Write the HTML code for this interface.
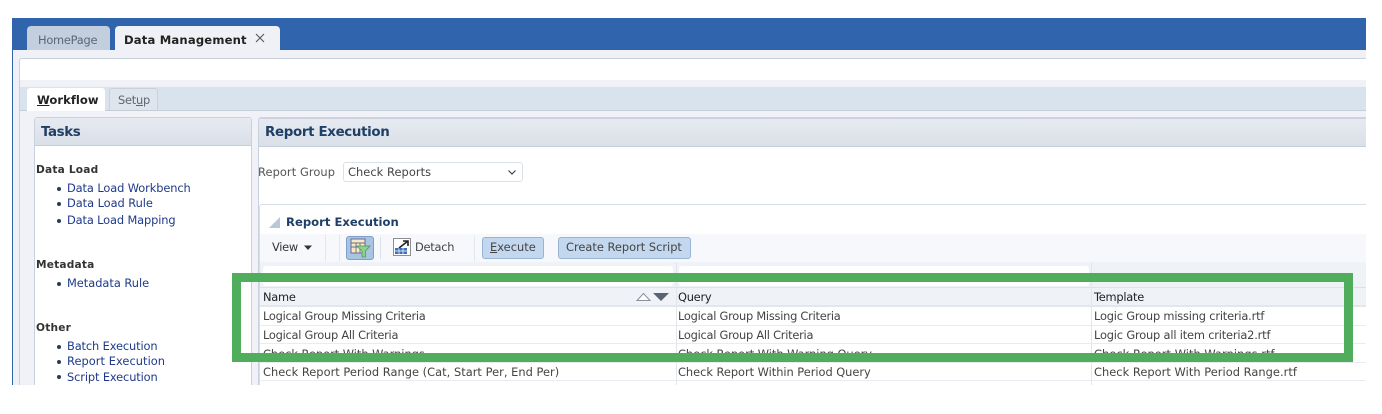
<!DOCTYPE html>
<html><head><meta charset="utf-8">
<style>
html,body{margin:0;padding:0;background:#fff}
body{width:1382px;height:414px;position:relative;overflow:hidden;font-family:"DejaVu Sans","Liberation Sans",sans-serif;font-size:11.4px;color:#333}
.a{position:absolute}
.t{position:absolute;white-space:nowrap;line-height:16px}
.lk{color:#1f3a8a;letter-spacing:-.1px}
.sec{font-weight:bold;color:#333;font-size:10.6px;letter-spacing:.2px}
.dot{position:absolute;width:4px;height:4px;border-radius:50%;background:#2c3a55}
.row{color:#444;letter-spacing:-.25px}
.head{color:#222;letter-spacing:-.25px}
u{text-decoration:underline}
</style></head><body>
<div class="a" style="left:12px;top:18px;width:1354px;height:32px;background:#3064ac"></div>
<div class="a" style="left:12px;top:18px;width:1px;height:367px;background:#3064ac"></div>
<div class="a" style="left:13px;top:50px;width:1353px;height:335px;background:#eff1f6"></div>
<div class="a" style="left:27px;top:26px;width:83px;height:24px;background:#c3cfdf;border-radius:4px 4px 0 0"></div>
<div class="t" style="left:38px;top:32px;color:#5c6675;font-size:11.4px;letter-spacing:-.25px">HomePage</div>
<div class="a" style="left:115px;top:26px;width:165px;height:25px;background:#eff1f6;border-radius:4px 4px 0 0"></div>
<div class="t" style="left:124px;top:32px;font-weight:bold;color:#222;font-size:11.6px;letter-spacing:.17px">Data Management</div>
<svg class="a" style="left:255px;top:33px" width="10" height="10"><path d="M1 1L9 9M9 1L1 9" stroke="#555" stroke-width="1.1"/></svg>

<div class="a" style="left:19px;top:58px;width:1347px;height:327px;background:#fff;border-top:1px solid #c9d1dc;border-left:1px solid #c9d1dc;border-radius:3px 0 0 0;box-sizing:border-box"></div>
<div class="a" style="left:20px;top:80px;width:1346px;height:305px;background:#f0f2f7"></div>
<div class="a" style="left:20px;top:87px;width:1346px;height:23px;background:#d9e3ed"></div>
<div class="a" style="left:20px;top:110px;width:1346px;height:1px;background:#c5cdd9"></div>
<div class="a" style="left:27px;top:88px;width:78px;height:23px;background:#fff;border-radius:3px 3px 0 0"></div>
<div class="t" style="left:37px;top:92px;font-weight:bold;color:#222;font-size:11.6px;letter-spacing:.02px"><u>W</u>orkflow</div>
<div class="a" style="left:109px;top:88px;width:49px;height:22px;background:#dfe5ec;border:1px solid #c9d1dc;border-bottom:0;border-radius:3px 3px 0 0;box-sizing:border-box"></div>
<div class="t" style="left:118px;top:92px;color:#5c6675;letter-spacing:-.25px">Set<u>u</u>p</div>

<!-- tasks -->
<div class="a" style="left:34px;top:117px;width:218px;height:268px;background:#fff;border:1px solid #c9d1dc;border-bottom:0;border-radius:3px 3px 0 0;box-sizing:border-box"></div>
<div class="a" style="left:35px;top:118px;width:216px;height:27px;background:linear-gradient(#e7eaf1,#dae0e8);border-bottom:1px solid #c5cdd9"></div>
<div class="t" style="left:41px;top:125px;font-weight:bold;color:#1f3f66;font-size:13.4px;letter-spacing:-.4px">Tasks</div>
<div class="t sec" style="left:36px;top:162px">Data Load</div>
<div class="dot" style="left:57px;top:187px"></div><div class="t lk" style="left:67px;top:180px">Data Load Workbench</div>
<div class="dot" style="left:57px;top:202px"></div><div class="t lk" style="left:67px;top:195px;letter-spacing:-.05px">Data Load Rule</div>
<div class="dot" style="left:57px;top:219px"></div><div class="t lk" style="left:67px;top:212px;letter-spacing:-.13px">Data Load Mapping</div>
<div class="t sec" style="left:36px;top:257px">Metadata</div>
<div class="dot" style="left:57px;top:282px"></div><div class="t lk" style="left:67px;top:275px;letter-spacing:-.02px">Metadata Rule</div>
<div class="t sec" style="left:36px;top:320px">Other</div>
<div class="dot" style="left:57px;top:345px"></div><div class="t lk" style="left:67px;top:338px;letter-spacing:-.12px">Batch Execution</div>
<div class="dot" style="left:57px;top:360px"></div><div class="t lk" style="left:67px;top:353px;letter-spacing:.05px">Report Execution</div>
<div class="dot" style="left:57px;top:375px"></div><div class="t lk" style="left:67px;top:369px;letter-spacing:-.12px">Script Execution</div>

<!-- report panel -->
<div class="a" style="left:258px;top:117px;width:1108px;height:268px;background:#fff;border-top:2px solid #cdd2df;border-left:1px solid #c9d1dc;border-radius:3px 0 0 0;box-sizing:border-box"></div>
<div class="a" style="left:259px;top:119px;width:1107px;height:27px;background:linear-gradient(#e7eaf1,#dae0e8);border-bottom:1px solid #c5cdd9"></div>
<div class="t" style="left:265px;top:125px;font-weight:bold;color:#1f3f66;font-size:13.4px;letter-spacing:-.34px">Report Execution</div>
<div class="t" style="left:258px;top:164px;color:#555;letter-spacing:.08px">Report Group</div>
<div class="a" style="left:343px;top:162px;width:180px;height:20px;background:#fff;border:1px solid #dbe1e8;border-radius:3px;box-sizing:border-box"></div>
<div class="t" style="left:348px;top:164px;color:#444;letter-spacing:.06px">Check Reports</div>
<svg class="a" style="left:507px;top:169px" width="10" height="7"><path d="M1.5 1.5L5 5L8.5 1.5" fill="none" stroke="#444" stroke-width="1.2"/></svg>

<div class="a" style="left:259px;top:204px;width:1107px;height:181px;background:#fff;border-top:1px solid #d8dee6;border-left:1px solid #d8dee6;border-radius:3px 0 0 0;box-sizing:border-box"></div>
<svg class="a" style="left:268px;top:216px" width="13" height="13"><path d="M12 1V12H1Z" fill="#b9c7d8"/></svg>
<div class="t" style="left:286px;top:214px;font-weight:bold;color:#1f3f66;font-size:11.6px;letter-spacing:.02px">Report Execution</div>

<div class="a" style="left:260px;top:234px;width:1106px;height:28px;background:#f6f8fc;border-bottom:1px solid #dde2ea"></div>
<div class="t" style="left:272px;top:239px;color:#333;letter-spacing:-.3px">View</div>
<svg class="a" style="left:303px;top:245px" width="10" height="6"><path d="M1 .5H9L5 5Z" fill="#333"/></svg>
<div class="a" style="left:325px;top:235px;width:1px;height:26px;background:#e2e6ed"></div>
<div class="a" style="left:339px;top:235px;width:1px;height:26px;background:#e2e6ed"></div>
<div class="a" style="left:346px;top:236px;width:28px;height:24px;background:#a9c4e2;border:1px solid #7fa0c6;border-radius:3px;box-sizing:border-box"></div>
<svg class="a" style="left:350px;top:238px" width="21" height="20"><rect x="1" y="1" width="14" height="14" fill="#f4e9c0" stroke="#6a6a9a"/><path d="M1 5H15M1 9H15M6 5V15M10 5V15" stroke="#6a6a9a" stroke-width=".9"/><path d="M7 8H20L15.5 13V19H12V13Z" fill="#8ed08e" stroke="#4d9a55" stroke-width=".8"/></svg>
<div class="a" style="left:380px;top:237px;width:1px;height:22px;background:#dde2ea"></div>
<svg class="a" style="left:393px;top:238px" width="19" height="20"><rect x=".5" y=".5" width="17" height="17" fill="#fff" stroke="#222" stroke-dasharray="1 1"/><rect x="2" y="10" width="12" height="6" fill="#3f6fc0"/><path d="M2 13H14M6 10V16M10 10V16" stroke="#fff" stroke-width=".7"/><path d="M6 10L15 3M10 3H15V8" fill="none" stroke="#222" stroke-width="1.6"/></svg>
<div class="t" style="left:415px;top:239px;color:#444;letter-spacing:-.25px">Detach</div>
<div class="a" style="left:474px;top:236px;width:1px;height:25px;background:#e2e6ed"></div>
<div class="a" style="left:482px;top:237px;width:62px;height:22px;background:#c3d7ee;border:1px solid #97b4d4;border-radius:3px;box-sizing:border-box"></div>
<div class="t" style="left:490px;top:239px;color:#444;letter-spacing:.03px"><u>E</u>xecute</div>
<div class="a" style="left:558px;top:237px;width:133px;height:22px;background:#c3d7ee;border:1px solid #97b4d4;border-radius:3px;box-sizing:border-box"></div>
<div class="t" style="left:566px;top:239px;color:#444;letter-spacing:0">Create Report Script</div>

<!-- table -->
<div class="a" style="left:260px;top:262px;width:1106px;height:44px;background:#eff3f8"></div>
<div class="a" style="left:263px;top:266px;width:410px;height:20px;background:#fff;border-radius:3px"></div>
<div class="a" style="left:679px;top:266px;width:410px;height:20px;background:#fff;border-radius:3px"></div>
<div class="a" style="left:260px;top:287px;width:1106px;height:1px;background:#dde2ea"></div>
<div class="a" style="left:260px;top:305px;width:1106px;height:2px;background:#e2e6ed"></div>
<div class="a" style="left:260px;top:325px;width:1106px;height:1px;background:#e8ebf0"></div>
<div class="a" style="left:260px;top:343px;width:1106px;height:1px;background:#e8ebf0"></div>
<div class="a" style="left:260px;top:362px;width:1106px;height:1px;background:#e8ebf0"></div>
<div class="a" style="left:260px;top:380px;width:1106px;height:1px;background:#e8ebf0"></div>
<div class="a" style="left:259px;top:262px;width:1px;height:123px;background:#d8dee6"></div>
<div class="a" style="left:676px;top:262px;width:1px;height:123px;background:#e2e6ed"></div>
<div class="a" style="left:1091px;top:262px;width:1px;height:123px;background:#e2e6ed"></div>
<svg class="a" style="left:636px;top:292px" width="34" height="10"><path d="M1 8.5L7.5 1.5L14 8.5Z" fill="#fff" stroke="#8a8f98"/><path d="M17 1H33L25 9Z" fill="#5a6372"/></svg>

<div class="t head" style="left:263px;top:289px">Name</div>
<div class="t head" style="left:678px;top:289px">Query</div>
<div class="t head" style="left:1094px;top:289px">Template</div>
<div class="t row" style="left:263px;top:308px">Logical Group Missing Criteria</div>
<div class="t row" style="left:678px;top:308px">Logical Group Missing Criteria</div>
<div class="t row" style="left:1094px;top:308px;letter-spacing:-.19px">Logic Group missing criteria.rtf</div>
<div class="t row" style="left:263px;top:327px">Logical Group All Criteria</div>
<div class="t row" style="left:678px;top:327px">Logical Group All Criteria</div>
<div class="t row" style="left:1094px;top:327px;letter-spacing:-.18px">Logic Group all item criteria2.rtf</div>
<div class="t row" style="left:263px;top:346px;letter-spacing:-.02px">Check Report With Warnings</div>
<div class="t row" style="left:678px;top:346px;letter-spacing:-.02px">Check Report With Warning Query</div>
<div class="t row" style="left:1094px;top:346px;letter-spacing:.05px">Check Report With Warnings.rtf</div>
<div class="t row" style="left:263px;top:364px;letter-spacing:.03px">Check Report Period Range (Cat, Start Per, End Per)</div>
<div class="t row" style="left:678px;top:364px;letter-spacing:-.03px">Check Report Within Period Query</div>
<div class="t row" style="left:1094px;top:364px;letter-spacing:.04px">Check Report With Period Range.rtf</div>

<!-- green highlight -->
<div class="a" style="left:232px;top:273px;width:1121px;height:89px;border:9px solid #4fad5b;box-sizing:border-box"></div>
</body></html>
